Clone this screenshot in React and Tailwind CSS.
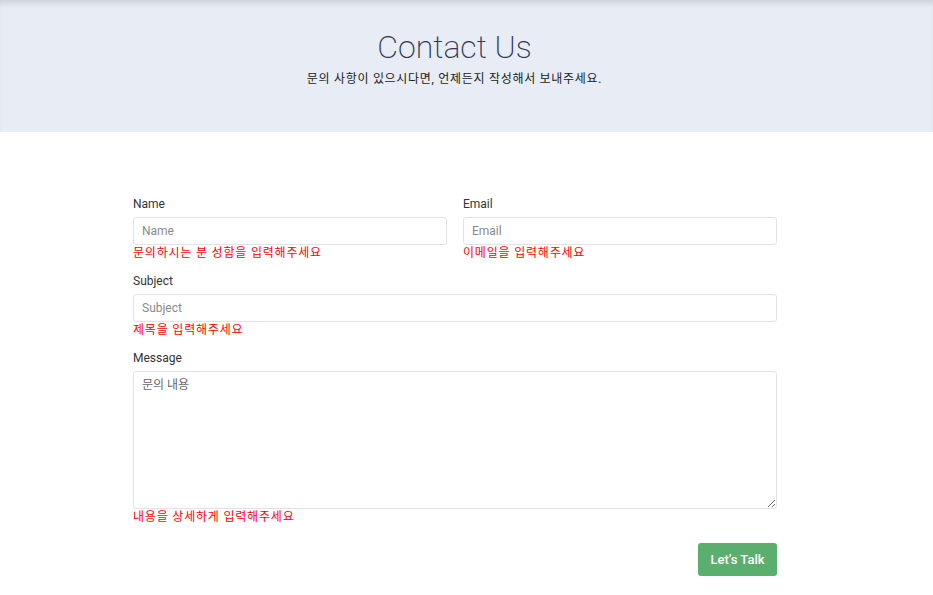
const font = { fontFamily: "Roboto, 'Noto Sans CJK KR', sans-serif" };

function Field({ label, placeholder, error, className = "" }) {
  return (
    <div className={"flex flex-col " + className}>
      <label className="text-[12px] leading-[18px] text-[#333] mb-[4px]">{label}</label>
      <input
        type="text"
        placeholder={placeholder}
        className="h-[28px] w-full border border-[#e2e2e2] rounded-[3px] px-[8px] text-[12px] text-[#333] placeholder:text-[#8a8a8a] outline-none"
      />
      <p className="text-[12px] leading-[16px] tracking-[0.8px] text-[#ff0000]">{error}</p>
    </div>
  );
}

export default function App() {
  return (
    <div className="w-full min-h-screen bg-white" style={font}>
      {/* Header */}
      <div className="w-full h-[132px] bg-[#e7ecf5] shadow-[inset_0_6px_6px_-3px_rgba(0,0,0,0.12)] flex flex-col items-center pt-[28px] pr-[24px]">
        <h1 className="text-[32px] leading-[38px] font-extralight text-[#2f3552]">Contact Us</h1>
        <p className="text-[12px] leading-[18px] tracking-[0.7px] text-[#222] mt-[4px]">
          문의 사항이 있으시다면, 언제든지 작성해서 보내주세요.
        </p>
      </div>

      {/* Form */}
      <div className="pl-[133px] pt-[63px] pb-[20px]">
        <form className="w-[644px] flex flex-col gap-[11px]" onSubmit={(e) => e.preventDefault()}>
          <div className="flex gap-[16px]">
            <Field className="flex-1" label="Name" placeholder="Name" error="문의하시는 분 성함을 입력해주세요" />
            <Field className="flex-1" label="Email" placeholder="Email" error="이메일을 입력해주세요" />
          </div>
          <Field label="Subject" placeholder="Subject" error="제목을 입력해주세요" />
          <div className="flex flex-col">
            <label className="text-[12px] leading-[18px] text-[#333] mb-[4px]">Message</label>
            <textarea
              placeholder="문의 내용"
              className="h-[138px] w-full border border-[#e2e2e2] rounded-[3px] px-[8px] py-[4px] text-[12px] text-[#333] placeholder:text-[#666] outline-none"
            />
            <p className="text-[12px] leading-[16px] tracking-[0.8px] text-[#ff0000]">내용을 상세하게 입력해주세요</p>
          </div>
          <div className="flex justify-end pt-[7px]">
            <button
              type="submit"
              className="w-[79px] h-[33px] rounded-[3px] bg-[#5aae6e] text-white text-[13px] font-medium"
            >
              Let’s Talk
            </button>
          </div>
        </form>
      </div>
    </div>
  );
}
